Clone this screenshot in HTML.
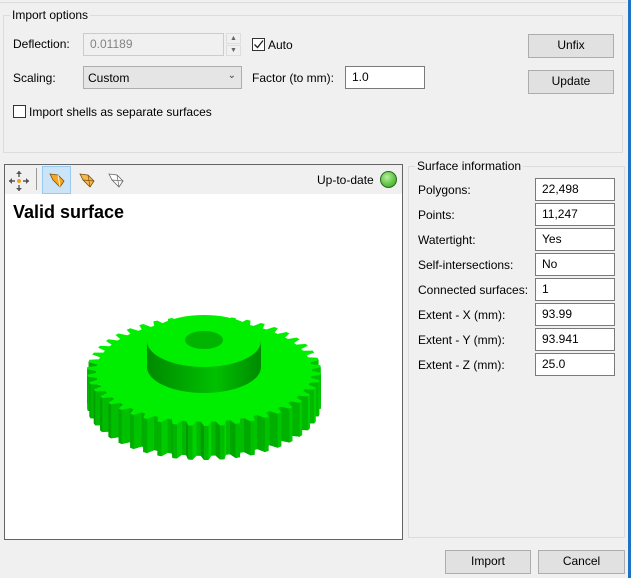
<!DOCTYPE html>
<html><head><meta charset="utf-8"><style>
*{box-sizing:border-box}
body{margin:0;width:631px;height:578px;background:#f0f0f0;font:12px "Liberation Sans",sans-serif;color:#000;position:relative;overflow:hidden}
.a{position:absolute;white-space:nowrap}
.grp{position:absolute;border:1px solid #dcdcdc}
.lg{position:absolute;background:#f0f0f0;padding:0 2px;top:-8px;left:6px}
.inp{position:absolute;background:#fff;border:1px solid #7a7a7a;height:23px;padding:3px 6px}
.btn{position:absolute;background:#e1e1e1;border:1px solid #adadad;text-align:center;line-height:21px}
.cb{position:absolute;width:13px;height:13px;border:1px solid #333;background:#fff}
</style></head><body>
<div class="a" style="left:0;top:0;width:627px;height:3px;border-bottom:1px solid #dcdcdc"></div>
<div class="a" style="left:628px;top:0;width:3px;height:578px;background:#1a73c8"></div>

<div class="grp" style="left:3px;top:15px;width:620px;height:138px"><div class="lg">Import options</div></div>
<div class="a" style="left:13px;top:37px">Deflection:</div>
<div class="inp" style="left:83px;top:33px;width:141px;border-color:#ccc;background:#f0f0f0;color:#838383">0.01189</div>
<div class="a" style="left:226px;top:33px;width:15px;height:11px;border:1px solid #ddd;font-size:7px;color:#666;text-align:center;line-height:9px">▲</div>
<div class="a" style="left:226px;top:45px;width:15px;height:11px;border:1px solid #ddd;font-size:7px;color:#666;text-align:center;line-height:9px">▼</div>
<div class="cb" style="left:252px;top:38px"><svg width="11" height="11" style="position:absolute;left:0;top:0"><path d="M1.5 5.5 L4.5 8.5 L10 1.5" fill="none" stroke="#222" stroke-width="1.3"/></svg></div>
<div class="a" style="left:268px;top:38px">Auto</div>
<div class="a" style="left:13px;top:71px">Scaling:</div>
<div class="a" style="left:83px;top:66px;width:159px;height:23px;background:#e5e5e5;border:1px solid #adadad;padding:4px 4px">Custom<span style="position:absolute;right:5px;top:3px;font-size:10px;color:#444">&#8964;</span></div>
<div class="a" style="left:252px;top:71px">Factor (to mm):</div>
<div class="inp" style="left:345px;top:66px;width:80px">1.0</div>
<div class="btn" style="left:528px;top:34px;width:86px;height:24px">Unfix</div>
<div class="btn" style="left:528px;top:70px;width:86px;height:24px">Update</div>
<div class="cb" style="left:13px;top:105px"></div>
<div class="a" style="left:29px;top:105px">Import shells as separate surfaces</div>

<div class="a" style="left:4px;top:164px;width:399px;height:376px;border:1px solid #646464;background:#fff">
 <div class="a" style="left:0;top:0;width:397px;height:29px;background:#f0f0f0"></div>
 <svg class="a" style="left:3px;top:5px" width="22" height="22" viewBox="0 0 22 22"><g stroke="#555" stroke-width="1.4" fill="none"><path d="M11 1v6M11 15v6M1 11h6M15 11h6"/></g><path d="M8 4l3-3 3 3M8 18l3 3 3-3M4 8l-3 3 3 3M18 8l3 3-3 3" fill="#555"/><circle cx="11" cy="11" r="2" fill="#f0a020"/></svg>
 <div class="a" style="left:31px;top:3px;width:1px;height:22px;background:#999"></div>
 <div class="a" style="left:37px;top:1px;width:29px;height:28px;background:#cce4f7;border:1px solid #99c9ef"></div>
 <svg class="a" style="left:43px;top:7px" width="18" height="16"><path d="M2 2 L10 3 L16 9 L12 15 L5 8Z" fill="#f7a823" stroke="#7a5010" stroke-width="0.8"/><path d="M10 3 L12 15" stroke="#fff" stroke-width="0.8"/></svg>
 <svg class="a" style="left:73px;top:7px" width="18" height="16"><path d="M2 2 L10 3 L16 9 L12 15 L5 8Z" fill="#f7b84a" stroke="#7a5010" stroke-width="0.8"/><path d="M10 3 L12 15 M5 8 L16 9" stroke="#7a5010" stroke-width="0.7"/></svg>
 <svg class="a" style="left:102px;top:7px" width="18" height="16"><path d="M2 2 L10 3 L16 9 L12 15 L5 8Z" fill="#fff" stroke="#666" stroke-width="0.8"/><path d="M10 3 L12 15 M5 8 L16 9" stroke="#666" stroke-width="0.7"/></svg>
 <div class="a" style="left:312px;top:8px">Up-to-date</div>
 <div class="a" style="left:375px;top:6px;width:17px;height:17px;border-radius:50%;background:radial-gradient(circle at 40% 35%,#b8f0a0,#5cc040 60%,#3a9a28);border:1px solid #2a6a20"></div>
 <div class="a" style="left:8px;top:37px;font-size:18px;font-weight:bold">Valid surface</div>
 <svg id="g" class="a" style="left:-4px;top:-164px" width="400" height="540"></svg>
</div>

<div class="grp" style="left:408px;top:166px;width:217px;height:372px"><div class="lg">Surface information</div></div>
<div class="a" style="left:418px;top:183px">Polygons:</div><div class="inp" style="left:535px;top:178px;width:80px">22,498</div>
<div class="a" style="left:418px;top:208px">Points:</div><div class="inp" style="left:535px;top:203px;width:80px">11,247</div>
<div class="a" style="left:418px;top:233px">Watertight:</div><div class="inp" style="left:535px;top:228px;width:80px">Yes</div>
<div class="a" style="left:418px;top:258px">Self-intersections:</div><div class="inp" style="left:535px;top:253px;width:80px">No</div>
<div class="a" style="left:418px;top:283px">Connected surfaces:</div><div class="inp" style="left:535px;top:278px;width:80px">1</div>
<div class="a" style="left:418px;top:308px">Extent - X (mm):</div><div class="inp" style="left:535px;top:303px;width:80px">93.99</div>
<div class="a" style="left:418px;top:333px">Extent - Y (mm):</div><div class="inp" style="left:535px;top:328px;width:80px">93.941</div>
<div class="a" style="left:418px;top:358px">Extent - Z (mm):</div><div class="inp" style="left:535px;top:353px;width:80px">25.0</div>

<div class="btn" style="left:445px;top:550px;width:86px;height:24px">Import</div>
<div class="btn" style="left:538px;top:550px;width:87px;height:24px">Cancel</div>

<script>
(function(){
var s=document.getElementById('g'),cx=203,cy=370,k=0.47,H=34,N=46,Ro=117,Ri=108,pts=[];
for(var i=0;i<N;i++){var b=i/N*2*Math.PI,d=2*Math.PI/N;
 [[0,Ri],[0.22,Ro],[0.5,Ro],[0.72,Ri]].forEach(function(p){var t=b+p[0]*d;pts.push([cx+p[1]*Math.cos(t),cy+p[1]*Math.sin(t)*k,t]);});}
function poly(a,dy,f){return '<polygon points="'+a.map(function(p){return p[0].toFixed(1)+','+(p[1]+dy).toFixed(1)}).join(' ')+'" fill="'+f+'"/>';}
var h=poly(pts,H,'#00a000'),q=[];
for(var i=0;i<pts.length;i++){var p=pts[i],n=pts[(i+1)%pts.length];
 if(Math.sin(p[2])<-0.2&&Math.sin(n[2])<-0.2)continue;
 var dx=n[0]-p[0],dy=n[1]-p[1],nx=dy,l=Math.hypot(dx,dy)||1;var sh=0.5+0.5*(nx/l);
 var g=Math.round(150+70*sh);
 q.push({y:(p[1]+n[1])/2,s:poly([p,n,[n[0],n[1]+H],[p[0],p[1]+H]],0,'rgb(0,'+g+',0)')});}
q.sort(function(a,b){return a.y-b.y});q.forEach(function(o){h+=o.s});
h+=poly(pts,0,'#00ee00');
h+='<defs><linearGradient id="hg" x1="0" x2="1"><stop offset="0" stop-color="#008a00"/><stop offset="0.6" stop-color="#00c000"/><stop offset="1" stop-color="#008a00"/></linearGradient></defs>';
h+='<ellipse cx="203" cy="366" rx="57" ry="26" fill="url(#hg)"/><rect x="146" y="340" width="114" height="26" fill="url(#hg)"/><ellipse cx="203" cy="340" rx="57" ry="26" fill="#00ee00"/><ellipse cx="203" cy="339" rx="19" ry="9" fill="#00b400"/>';
s.innerHTML=h;})();
</script>
</body></html>
